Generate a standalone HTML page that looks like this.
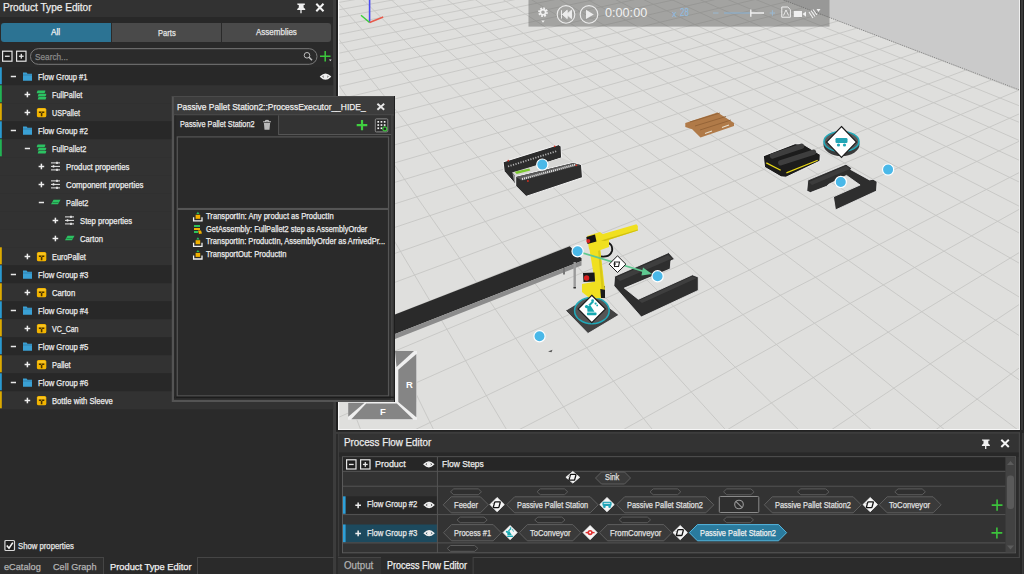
<!DOCTYPE html>
<html><head><meta charset="utf-8"><style>
html,body{margin:0;padding:0;width:1024px;height:574px;overflow:hidden;background:#2b2b2b;}
.t{position:absolute;font-family:"Liberation Sans",sans-serif;line-height:1;white-space:nowrap;transform-origin:0 0;-webkit-text-stroke:0.25px currentColor;}
.r{position:absolute;}
svg.r{overflow:visible;}
</style></head><body>
<div class="r" style="left:0px;top:0px;width:334px;height:574px;background:#2a2a2a;"></div>
<div class="r" style="left:0px;top:0px;width:334px;height:16.6px;background:#323232;"></div>
<div class="r" style="left:0px;top:16.6px;width:334px;height:6.4px;background:#282828;"></div>
<div class="t" style="left:3.40px;top:1.61px;font-size:10.5px;color:#ececec;transform:scaleX(0.9629);">Product Type Editor</div>
<svg class="r" style="left:295px;top:2px;" width="14" height="12" viewBox="0 0 14 12"><path d="M2.2,1.5 h7.6 v1.4 h-1.2 v2.6 l1.6,1.6 v1 h-8 v-1 l1.6,-1.6 v-2.6 h-1.2 z" fill="#f0f0f0"/><path d="M6,8 v3.2" stroke="#f0f0f0" stroke-width="1.3"/></svg>
<svg class="r" style="left:314px;top:2px;" width="12" height="12" viewBox="0 0 12 12"><path d="M2.3,1.8 L9.5,9.3 M9.5,1.8 L2.3,9.3" stroke="#f4f4f4" stroke-width="2" fill="none"/></svg>
<div class="r" style="left:333.3px;top:0px;width:2.6px;height:574px;background:#3c3c3c;"></div>
<div class="r" style="left:335.9px;top:0px;width:2.1px;height:574px;background:#1f1f1f;"></div>
<div class="r" style="left:1px;top:23px;width:110px;height:19px;background:#2c7393;border-radius:3px 0 0 3px"></div>
<div class="r" style="left:112px;top:23px;width:108.5px;height:19px;background:#4a4a4a;"></div>
<div class="r" style="left:222px;top:23px;width:109px;height:19px;background:#4a4a4a;border-radius:0 3px 3px 0"></div>
<div class="t" style="left:51.20px;top:28.42px;font-size:8.6px;color:#f4f4f4;transform:scaleX(0.9625);">All</div>
<div class="t" style="left:157.50px;top:28.52px;font-size:8.6px;color:#e6e6e6;transform:scaleX(0.8818);">Parts</div>
<div class="t" style="left:256.10px;top:28.42px;font-size:8.6px;color:#e6e6e6;transform:scaleX(0.9302);">Assemblies</div>
<svg class="r" style="left:0px;top:48px;" width="334" height="18" viewBox="0 0 334 18"><rect x="2.6" y="3.2" width="9.4" height="10" fill="#1e1e1e" stroke="#e6e6e6" stroke-width="1.2"/><rect x="4.9" y="7.6" width="4.8" height="1.3" fill="#e6e6e6"/><rect x="16.6" y="3.2" width="9.4" height="10" fill="#1e1e1e" stroke="#e6e6e6" stroke-width="1.2"/><rect x="18.9" y="7.6" width="4.8" height="1.3" fill="#e6e6e6"/><rect x="20.65" y="5.85" width="1.3" height="4.8" fill="#e6e6e6"/><rect x="30.5" y="0.7" width="286.5" height="15.6" rx="7.8" fill="#2b2b2b" stroke="#7a7a7a" stroke-width="1"/><circle cx="307" cy="7.3" r="2.8" fill="none" stroke="#bdbdbd" stroke-width="1"/><path d="M309,9.3 L312,12.3" stroke="#bdbdbd" stroke-width="1.6"/><path d="M320,8.2 h10.5 M325.2,3 v10.5" stroke="#3cc83c" stroke-width="1.5"/><path d="M329,11.5 h2.6 l-1.3,1.8 z" fill="#ddd"/></svg>
<div class="t" style="left:35.40px;top:52.53px;font-size:9.3px;color:#8a8a8a;transform:scaleX(0.8867);">Search...</div>
<svg class="r" style="left:0px;top:0px;" width="334" height="574" viewBox="0 0 334 574"><rect x="0" y="67.3" width="333.3" height="18" fill="#282828"/><rect x="0" y="67.3" width="1.8" height="17" fill="#2a9ad0"/><rect x="10.8" y="75.75" width="5.2" height="1.5" fill="#e8e8e8"/><g transform="translate(23,72.1)"><path d="M0,0.5 h3.5 l1,1.2 h4.5 v7 h-9 z" fill="#3aa0d4"/><rect x="0" y="2.6" width="9" height="0.6" fill="#2b6f94"/></g><rect x="0" y="85.3" width="333.3" height="18" fill="#323232"/><rect x="0" y="85.3" width="1.8" height="17" fill="#22b455"/><rect x="24.599999999999998" y="93.75" width="5.6" height="1.5" fill="#f0f0f0"/><rect x="26.65" y="91.7" width="1.5" height="5.6" fill="#f0f0f0"/><g transform="translate(36.7,90.2)" fill="#2cc262"><path d="M1.3,0.2 h7 q0.6,0 0.4,0.6 l-0.6,1.8 q-0.2,0.4 -0.7,0.4 h-7 q-0.5,0 -0.3,-0.5 l0.6,-1.9 q0.2,-0.4 0.6,-0.4 z"/><path d="M2.3,3.6 h7 q0.5,0 0.3,0.5 l-0.6,1.8 q-0.2,0.4 -0.6,0.4 h-7 q-0.5,0 -0.3,-0.5 l0.6,-1.8 q0.2,-0.4 0.6,-0.4 z"/><path d="M2.3,6.7 h7 q0.5,0 0.3,0.5 l-0.6,1.8 q-0.2,0.4 -0.6,0.4 h-7 q-0.5,0 -0.3,-0.5 l0.6,-1.8 q0.2,-0.4 0.6,-0.4 z"/></g><rect x="0" y="103.3" width="333.3" height="18" fill="#323232"/><rect x="0" y="103.3" width="1.8" height="17" fill="#dcaa00"/><rect x="24.599999999999998" y="111.75" width="5.6" height="1.5" fill="#f0f0f0"/><rect x="26.65" y="109.7" width="1.5" height="5.6" fill="#f0f0f0"/><g transform="translate(36.7,107.8)"><rect x="0.2" y="0.2" width="9.4" height="9.3" rx="1.6" fill="#f2b400"/><path d="M1,2.2 h7.8" stroke="#ffd84a" stroke-width="0.9"/><path d="M2.2,3.6 h5.4 v1.6 h-1.9 v3.2 h-1.6 v-3.2 h-1.9 z" fill="#4a3400"/><path d="M4.9,3.6 v1.6" stroke="#f2b400" stroke-width="0.6"/></g><rect x="0" y="121.3" width="333.3" height="18" fill="#282828"/><rect x="0" y="121.3" width="1.8" height="17" fill="#2a9ad0"/><rect x="10.8" y="129.75" width="5.2" height="1.5" fill="#e8e8e8"/><g transform="translate(23,126.1)"><path d="M0,0.5 h3.5 l1,1.2 h4.5 v7 h-9 z" fill="#3aa0d4"/><rect x="0" y="2.6" width="9" height="0.6" fill="#2b6f94"/></g><rect x="0" y="139.3" width="333.3" height="18" fill="#323232"/><rect x="0" y="139.3" width="1.8" height="17" fill="#22b455"/><rect x="24.799999999999997" y="147.75" width="5.2" height="1.5" fill="#e8e8e8"/><g transform="translate(36.7,144.20000000000002)" fill="#2cc262"><path d="M1.3,0.2 h7 q0.6,0 0.4,0.6 l-0.6,1.8 q-0.2,0.4 -0.7,0.4 h-7 q-0.5,0 -0.3,-0.5 l0.6,-1.9 q0.2,-0.4 0.6,-0.4 z"/><path d="M2.3,3.6 h7 q0.5,0 0.3,0.5 l-0.6,1.8 q-0.2,0.4 -0.6,0.4 h-7 q-0.5,0 -0.3,-0.5 l0.6,-1.8 q0.2,-0.4 0.6,-0.4 z"/><path d="M2.3,6.7 h7 q0.5,0 0.3,0.5 l-0.6,1.8 q-0.2,0.4 -0.6,0.4 h-7 q-0.5,0 -0.3,-0.5 l0.6,-1.8 q0.2,-0.4 0.6,-0.4 z"/></g><rect x="0" y="157.3" width="333.3" height="18" fill="#323232"/><rect x="38.6" y="165.75" width="5.6" height="1.5" fill="#f0f0f0"/><rect x="40.65" y="163.7" width="1.5" height="5.6" fill="#f0f0f0"/><g transform="translate(51,161.9)" stroke="#e8e8e8" stroke-width="1" fill="none"><path d="M0,1 h9 M0,4.5 h9 M0,8 h9"/><path d="M6,-0.2 v2.4 M2.5,3.3 v2.4 M6,6.8 v2.4" stroke-width="1.6"/></g><rect x="0" y="175.3" width="333.3" height="18" fill="#323232"/><rect x="38.6" y="183.75" width="5.6" height="1.5" fill="#f0f0f0"/><rect x="40.65" y="181.7" width="1.5" height="5.6" fill="#f0f0f0"/><g transform="translate(51,179.9)" stroke="#e8e8e8" stroke-width="1" fill="none"><path d="M0,1 h9 M0,4.5 h9 M0,8 h9"/><path d="M6,-0.2 v2.4 M2.5,3.3 v2.4 M6,6.8 v2.4" stroke-width="1.6"/></g><rect x="0" y="193.3" width="333.3" height="18" fill="#323232"/><rect x="38.8" y="201.75" width="5.2" height="1.5" fill="#e8e8e8"/><g transform="translate(51,199.70000000000002)"><path d="M2.5,0 h7 l-2.5,4.6 h-7 z" fill="#2cc262"/><path d="M1.5,2.8 h6" stroke="#1c6b3a" stroke-width="0.6"/></g><rect x="0" y="211.3" width="333.3" height="18" fill="#323232"/><rect x="52.6" y="219.75" width="5.6" height="1.5" fill="#f0f0f0"/><rect x="54.65" y="217.7" width="1.5" height="5.6" fill="#f0f0f0"/><g transform="translate(65,215.9)" stroke="#e8e8e8" stroke-width="1" fill="none"><path d="M0,1 h9 M0,4.5 h9 M0,8 h9"/><path d="M6,-0.2 v2.4 M2.5,3.3 v2.4 M6,6.8 v2.4" stroke-width="1.6"/></g><rect x="0" y="229.3" width="333.3" height="18" fill="#323232"/><rect x="52.6" y="237.75" width="5.6" height="1.5" fill="#f0f0f0"/><rect x="54.65" y="235.7" width="1.5" height="5.6" fill="#f0f0f0"/><g transform="translate(65,235.70000000000002)"><path d="M2.5,0 h7 l-2.5,4.6 h-7 z" fill="#2cc262"/><path d="M1.5,2.8 h6" stroke="#1c6b3a" stroke-width="0.6"/></g><rect x="0" y="247.3" width="333.3" height="18" fill="#323232"/><rect x="0" y="247.3" width="1.8" height="17" fill="#dcaa00"/><rect x="24.599999999999998" y="255.75" width="5.6" height="1.5" fill="#f0f0f0"/><rect x="26.65" y="253.7" width="1.5" height="5.6" fill="#f0f0f0"/><g transform="translate(36.7,251.8)"><rect x="0.2" y="0.2" width="9.4" height="9.3" rx="1.6" fill="#f2b400"/><path d="M1,2.2 h7.8" stroke="#ffd84a" stroke-width="0.9"/><path d="M2.2,3.6 h5.4 v1.6 h-1.9 v3.2 h-1.6 v-3.2 h-1.9 z" fill="#4a3400"/><path d="M4.9,3.6 v1.6" stroke="#f2b400" stroke-width="0.6"/></g><rect x="0" y="265.3" width="333.3" height="18" fill="#282828"/><rect x="0" y="265.3" width="1.8" height="17" fill="#2a9ad0"/><rect x="10.8" y="273.75" width="5.2" height="1.5" fill="#e8e8e8"/><g transform="translate(23,270.1)"><path d="M0,0.5 h3.5 l1,1.2 h4.5 v7 h-9 z" fill="#3aa0d4"/><rect x="0" y="2.6" width="9" height="0.6" fill="#2b6f94"/></g><rect x="0" y="283.3" width="333.3" height="18" fill="#323232"/><rect x="0" y="283.3" width="1.8" height="17" fill="#dcaa00"/><rect x="24.599999999999998" y="291.75" width="5.6" height="1.5" fill="#f0f0f0"/><rect x="26.65" y="289.7" width="1.5" height="5.6" fill="#f0f0f0"/><g transform="translate(36.7,287.8)"><rect x="0.2" y="0.2" width="9.4" height="9.3" rx="1.6" fill="#f2b400"/><path d="M1,2.2 h7.8" stroke="#ffd84a" stroke-width="0.9"/><path d="M2.2,3.6 h5.4 v1.6 h-1.9 v3.2 h-1.6 v-3.2 h-1.9 z" fill="#4a3400"/><path d="M4.9,3.6 v1.6" stroke="#f2b400" stroke-width="0.6"/></g><rect x="0" y="301.3" width="333.3" height="18" fill="#282828"/><rect x="0" y="301.3" width="1.8" height="17" fill="#2a9ad0"/><rect x="10.8" y="309.75" width="5.2" height="1.5" fill="#e8e8e8"/><g transform="translate(23,306.1)"><path d="M0,0.5 h3.5 l1,1.2 h4.5 v7 h-9 z" fill="#3aa0d4"/><rect x="0" y="2.6" width="9" height="0.6" fill="#2b6f94"/></g><rect x="0" y="319.3" width="333.3" height="18" fill="#323232"/><rect x="0" y="319.3" width="1.8" height="17" fill="#dcaa00"/><rect x="24.599999999999998" y="327.75" width="5.6" height="1.5" fill="#f0f0f0"/><rect x="26.65" y="325.7" width="1.5" height="5.6" fill="#f0f0f0"/><g transform="translate(36.7,323.8)"><rect x="0.2" y="0.2" width="9.4" height="9.3" rx="1.6" fill="#f2b400"/><path d="M1,2.2 h7.8" stroke="#ffd84a" stroke-width="0.9"/><path d="M2.2,3.6 h5.4 v1.6 h-1.9 v3.2 h-1.6 v-3.2 h-1.9 z" fill="#4a3400"/><path d="M4.9,3.6 v1.6" stroke="#f2b400" stroke-width="0.6"/></g><rect x="0" y="337.3" width="333.3" height="18" fill="#282828"/><rect x="0" y="337.3" width="1.8" height="17" fill="#2a9ad0"/><rect x="10.8" y="345.75" width="5.2" height="1.5" fill="#e8e8e8"/><g transform="translate(23,342.1)"><path d="M0,0.5 h3.5 l1,1.2 h4.5 v7 h-9 z" fill="#3aa0d4"/><rect x="0" y="2.6" width="9" height="0.6" fill="#2b6f94"/></g><rect x="0" y="355.3" width="333.3" height="18" fill="#323232"/><rect x="0" y="355.3" width="1.8" height="17" fill="#dcaa00"/><rect x="24.599999999999998" y="363.75" width="5.6" height="1.5" fill="#f0f0f0"/><rect x="26.65" y="361.7" width="1.5" height="5.6" fill="#f0f0f0"/><g transform="translate(36.7,359.8)"><rect x="0.2" y="0.2" width="9.4" height="9.3" rx="1.6" fill="#f2b400"/><path d="M1,2.2 h7.8" stroke="#ffd84a" stroke-width="0.9"/><path d="M2.2,3.6 h5.4 v1.6 h-1.9 v3.2 h-1.6 v-3.2 h-1.9 z" fill="#4a3400"/><path d="M4.9,3.6 v1.6" stroke="#f2b400" stroke-width="0.6"/></g><rect x="0" y="373.3" width="333.3" height="18" fill="#282828"/><rect x="0" y="373.3" width="1.8" height="17" fill="#2a9ad0"/><rect x="10.8" y="381.75" width="5.2" height="1.5" fill="#e8e8e8"/><g transform="translate(23,378.1)"><path d="M0,0.5 h3.5 l1,1.2 h4.5 v7 h-9 z" fill="#3aa0d4"/><rect x="0" y="2.6" width="9" height="0.6" fill="#2b6f94"/></g><rect x="0" y="391.3" width="333.3" height="18" fill="#323232"/><rect x="0" y="391.3" width="1.8" height="17" fill="#dcaa00"/><rect x="24.599999999999998" y="399.75" width="5.6" height="1.5" fill="#f0f0f0"/><rect x="26.65" y="397.7" width="1.5" height="5.6" fill="#f0f0f0"/><g transform="translate(36.7,395.8)"><rect x="0.2" y="0.2" width="9.4" height="9.3" rx="1.6" fill="#f2b400"/><path d="M1,2.2 h7.8" stroke="#ffd84a" stroke-width="0.9"/><path d="M2.2,3.6 h5.4 v1.6 h-1.9 v3.2 h-1.6 v-3.2 h-1.9 z" fill="#4a3400"/><path d="M4.9,3.6 v1.6" stroke="#f2b400" stroke-width="0.6"/></g><g transform="translate(325.5,76.6) scale(1.0)"><path d="M-4.6,0 Q0,-4.6 4.6,0 Q0,4.6 -4.6,0 Z" fill="none" stroke="#f0f0f0" stroke-width="1.6"/><circle cx="0" cy="0" r="2.1" fill="#f0f0f0"/></g></svg>
<div class="t" style="left:38.00px;top:73.22px;font-size:8.6px;color:#ececec;transform:scaleX(0.8777);">Flow Group #1</div>
<div class="t" style="left:51.90px;top:91.22px;font-size:8.6px;color:#ececec;transform:scaleX(0.8567);">FullPallet</div>
<div class="t" style="left:51.90px;top:109.22px;font-size:8.6px;color:#ececec;transform:scaleX(0.8338);">USPallet</div>
<div class="t" style="left:38.00px;top:127.22px;font-size:8.6px;color:#ececec;transform:scaleX(0.8865);">Flow Group #2</div>
<div class="t" style="left:51.90px;top:145.22px;font-size:8.6px;color:#ececec;transform:scaleX(0.8543);">FullPallet2</div>
<div class="t" style="left:65.90px;top:163.22px;font-size:8.6px;color:#ececec;transform:scaleX(0.9023);">Product properties</div>
<div class="t" style="left:65.90px;top:181.22px;font-size:8.6px;color:#ececec;transform:scaleX(0.9108);">Component properties</div>
<div class="t" style="left:65.90px;top:199.22px;font-size:8.6px;color:#ececec;transform:scaleX(0.8519);">Pallet2</div>
<div class="t" style="left:79.90px;top:217.22px;font-size:8.6px;color:#ececec;transform:scaleX(0.8951);">Step properties</div>
<div class="t" style="left:79.90px;top:235.22px;font-size:8.6px;color:#ececec;transform:scaleX(0.8872);">Carton</div>
<div class="t" style="left:51.90px;top:253.22px;font-size:8.6px;color:#ececec;transform:scaleX(0.8544);">EuroPallet</div>
<div class="t" style="left:38.00px;top:271.22px;font-size:8.6px;color:#ececec;transform:scaleX(0.8936);">Flow Group #3</div>
<div class="t" style="left:51.90px;top:289.22px;font-size:8.6px;color:#ececec;transform:scaleX(0.8989);">Carton</div>
<div class="t" style="left:38.00px;top:307.22px;font-size:8.6px;color:#ececec;transform:scaleX(0.8936);">Flow Group #4</div>
<div class="t" style="left:51.90px;top:325.22px;font-size:8.6px;color:#ececec;transform:scaleX(0.8153);">VC_Can</div>
<div class="t" style="left:38.00px;top:343.22px;font-size:8.6px;color:#ececec;transform:scaleX(0.8936);">Flow Group #5</div>
<div class="t" style="left:51.90px;top:361.22px;font-size:8.6px;color:#ececec;transform:scaleX(0.8693);">Pallet</div>
<div class="t" style="left:38.00px;top:379.22px;font-size:8.6px;color:#ececec;transform:scaleX(0.8936);">Flow Group #6</div>
<div class="t" style="left:51.90px;top:397.22px;font-size:8.6px;color:#ececec;transform:scaleX(0.8895);">Bottle with Sleeve</div>
<svg class="r" style="left:0px;top:538px;" width="80" height="16" viewBox="0 0 80 16"><rect x="4.9" y="2.5" width="9.6" height="10" rx="1" fill="#1e1e1e" stroke="#d8d8d8" stroke-width="1.2"/><path d="M6.8,7.6 L9,10.2 L12.8,4.6" stroke="#f4f4f4" stroke-width="1.6" fill="none"/></svg>
<div class="t" style="left:17.70px;top:541.82px;font-size:8.6px;color:#e6e6e6;transform:scaleX(0.8996);">Show properties</div>
<div class="r" style="left:0px;top:557px;width:104px;height:17px;background:#2e2e2e;"></div>
<div class="r" style="left:0px;top:557px;width:104px;height:1px;background:#454545;"></div>
<div class="r" style="left:103.3px;top:557px;width:1px;height:17px;background:#454545;"></div>
<div class="r" style="left:196.6px;top:557px;width:1px;height:17px;background:#454545;"></div>
<div class="r" style="left:197.6px;top:557px;width:136px;height:1px;background:#454545;"></div>
<div class="t" style="left:3.80px;top:561.57px;font-size:9.6px;color:#b4b4b4;transform:scaleX(0.9577);">eCatalog</div>
<div class="t" style="left:53.20px;top:561.57px;font-size:9.6px;color:#b4b4b4;transform:scaleX(0.9481);">Cell Graph</div>
<div class="t" style="left:109.70px;top:561.57px;font-size:9.6px;color:#f0f0f0;transform:scaleX(0.9711);">Product Type Editor</div>
<svg class="r" style="left:338px;top:0px;overflow:hidden" width="682.2" height="430" viewBox="0 0 682.2 430"><rect x="0" y="0" width="682.2" height="430" fill="#dfdfdd"/><path d="M-17.9,-26.2L6.5,-30.0M-17.7,-20.4L41.9,-30.0M-17.9,-14.3L77.4,-30.0M-17.7,-8.0L112.9,-29.9M-17.9,-1.3L148.4,-29.9M-17.7,5.7L184.3,-30.0M-17.9,13.2L219.8,-30.0M-17.7,20.9L255.4,-30.0M-17.9,29.3L290.9,-30.0M-17.6,38.0L326.4,-29.9M-17.9,47.3L362.0,-29.9M-17.6,57.1L397.9,-30.0M-17.9,67.7L433.4,-30.0M-17.6,78.8L469.0,-30.0M-17.9,90.9L504.6,-30.0M-17.6,103.6L540.2,-30.0M-17.9,117.5L575.7,-29.9M-17.6,132.2L611.6,-30.0M-18.0,148.4L647.2,-30.0M-17.6,165.6L682.8,-30.0M-18.0,184.6L701.8,-25.1M-17.5,205.0L701.9,-14.1M-18.0,227.7L701.9,-1.9M-17.5,252.3L701.8,11.4M-18.0,279.8L702.0,26.1M-17.5,310.0L701.9,42.5M-16.9,343.7L701.8,60.9M-17.4,382.1L701.7,81.5M-16.8,425.1L701.9,104.7M34.9,449.8L701.8,131.4M141.6,450.0L701.6,162.1M249.5,449.6L701.9,197.8M356.3,449.8L701.8,240.1M464.0,449.4L701.6,290.9M570.9,449.7L701.4,353.0M677.8,449.9L701.8,429.9M-17.9,324.6L30.5,449.9M-17.9,198.3L105.5,449.8M-18.0,116.1L180.6,449.8M-17.9,58.6L255.6,449.8M-17.9,16.1L330.7,449.8M-18.0,-16.8L405.7,449.7M-5.0,-30.0L480.8,449.7M20.0,-30.0L555.9,449.7M44.9,-30.0L630.9,449.6M69.9,-30.0L701.5,446.2M95.0,-29.9L701.5,394.0M119.9,-29.9L701.5,348.8M144.9,-29.9L701.5,309.4M169.9,-30.0L701.5,274.8M194.9,-30.0L701.5,244.0M219.8,-30.0L701.5,216.6M244.8,-30.0L701.5,191.9M270.0,-29.9L701.5,169.6M295.0,-29.9L701.5,149.4M320.0,-29.9L701.5,130.9M344.9,-29.9L701.6,114.0M369.9,-30.0L701.6,98.5M394.9,-30.0L701.6,84.2M419.9,-30.0L701.6,70.9M444.9,-30.0L701.6,58.6M470.2,-29.9L701.6,47.2M495.2,-29.9L701.6,36.5M520.2,-29.9L701.6,26.6M545.2,-30.0L701.6,17.2M570.1,-30.0L701.6,8.5M595.1,-30.0L701.6,0.2M620.1,-30.0L702.0,-7.4M645.5,-29.9L702.0,-14.8M670.5,-29.9L702.0,-21.7M695.5,-29.9L702.0,-28.3" stroke="#c6c6c4" stroke-width="0.9" fill="none"/><path d="M445.5,0 L682.2,0 L682.2,90.2 Z" fill="#cacaca"/><path d="M445.5,0 L682.2,90.2" stroke="#7a7a7a" stroke-width="0.8" stroke-dasharray="1.3,1"/><rect x="0" y="0" width="1.2" height="430" fill="#f6f6f6"/><rect x="0" y="429" width="682.2" height="1.1" fill="#f6f6f6"/><rect x="681.0" y="0" width="1.2" height="430" fill="#f0f0f0"/><g transform="translate(-338,0)"><path d="M369.6,0 V22.5" stroke="#4a4af0" stroke-width="1.6"/><path d="M369.6,22.5 L361,15.2" stroke="#3ad03a" stroke-width="1.4"/><path d="M369.6,22.5 L383.2,17" stroke="#e85a4a" stroke-width="1.4"/><path d="M503.1,161.9 L558.5,144.7 L561.1,146.3 L561.6,157.8 L515.0,173.0 L515.7,186.0 L526.1,196.4 L504.2,171.3 Z" fill="#2c2c2c" stroke="#f4f4f4" stroke-width="1"/><path d="M512.0,172.5 L561.6,157.8 L573.1,162.5 L517.0,177.5 Z" fill="#d6d6d4" /><path d="M514.6,171.8 L529.3,168.4 L530.3,170.5 L516.7,174.0 Z" fill="#7cc830" /><path d="M512.5,173.0 L515.5,177.0 L519.0,188.0 L514.0,181.0 Z" fill="#9a9a9a" /><path d="M515.7,176.5 L573.1,162.5 L581.5,164.6 L582.5,177.6 L526.1,196.4 L515.7,186.0 Z" fill="#2e2e2e" stroke="#f4f4f4" stroke-width="1"/><path d="M516.0,177.0 L573.1,163.0 L580.0,165.0 L522.0,180.5 Z" fill="#5a5a5a" /><path d="M522,179 L576,164.5" stroke="#e4e4e4" stroke-width="2" stroke-dasharray="1.1,0.9"/><path d="M508,166.5 L557,151" stroke="#b0b0b0" stroke-width="1.8" stroke-dasharray="1.2,1.4"/><circle cx="508.3" cy="160.7" r="0.9" fill="#d83020"/><circle cx="554.7" cy="146.3" r="0.9" fill="#d83020"/><circle cx="576.3" cy="165.3" r="0.9" fill="#d83020"/><circle cx="527.9" cy="181" r="0.9" fill="#d83020"/><path d="M685.3,123.1 L717.5,112.6 L734.0,123.1 L734.0,126.1 L700.5,137.5 L692.2,129.2 L685.3,127.0 Z" fill="#b07a48" /><path d="M690,122 L720,113 M695,126 L726,116.5 M700,130 L731,120" stroke="#8e5e34" stroke-width="0.8"/><path d="M705,133.5 L712,131 M722,127.5 L729,125" stroke="#e8e0d0" stroke-width="1.2"/><path d="M763.3,155.9 L795.1,143.7 L803.8,144.6 L820.3,154.6 L819.9,161.1 L785.9,177.2 L781.1,176.8 L764.6,167.2 Z" fill="#1c1c1c" stroke="#f4f4f4" stroke-width="0.9"/><path d="M772.5,156 L801.5,146.2" stroke="#3e3e3e" stroke-width="5.4" stroke-linecap="round"/><path d="M780.8,162.8 L813.5,152.2" stroke="#3e3e3e" stroke-width="5.4" stroke-linecap="round"/><path d="M766.3,162.9 L780.7,170.3 M786.4,172.9 L817.7,160.3" stroke="#e8d818" stroke-width="1.2" fill="none"/><ellipse cx="841.5" cy="144.5" rx="18" ry="11.5" fill="#3a3a3a"/><ellipse cx="841.5" cy="141.5" rx="17.5" ry="10" fill="#5a5a5a" stroke="#22a8b8" stroke-width="1.6"/><path d="M841.5,126.5 L856.5,142.0 L841.5,157.5 L826.5,142.0 Z" fill="#ffffff" stroke="#1a1a1a" stroke-width="1.1"/><rect x="835.5" y="138" width="12" height="5" rx="1.2" fill="#22a5b5"/><circle cx="838.5" cy="145" r="1.6" fill="#22a5b5"/><circle cx="844.5" cy="145" r="1.6" fill="#22a5b5"/><path d="M807.8,180.1 L846.0,164.2 L851.7,168.1 L850.7,169.6 L869.5,179.9 L873.1,179.2 L877.1,181.6 L876.5,191.0 L835.5,209.9 L833.4,196.8 L860.1,185.0 L846.5,175.4 L828.7,184.3 L826.6,186.3 L810.4,192.6 L806.8,191.1 Z" fill="#2e2e2e" stroke="#f0f0f0" stroke-width="0.8"/><path d="M809.0,182.0 L846.0,166.0 L850.0,169.0 L812.0,185.0 Z" fill="#3c3c3c" /><path d="M395.0,314.6 L569.8,246.3 L581.5,258.5 L581.5,261.0 L395.0,333.9 Z" fill="#2a2a2a" /><path d="M395.0,333.9 L581.5,261.0 L581.5,265.5 L395.0,339.1 Z" fill="#8c8c8c" /><path d="M574.7,262 V288" stroke="#9a9a9a" stroke-width="2.4"/><path d="M574.7,287 V288.5" stroke="#333" stroke-width="2.4"/><path d="M564,268 V274.5" stroke="#777" stroke-width="2"/><path d="M565.5,310.5 L592.0,294.5 L619.0,315.0 L588.0,333.5 Z" fill="#424242" stroke="#f0f0f0" stroke-width="0.8" stroke-linejoin="round"/><ellipse cx="591.9" cy="310.7" rx="17.3" ry="13.1" fill="#555" stroke="#20a8b8" stroke-width="1.5"/><path d="M582.0,284.0 L596.0,281.4 L605.0,287.0 L605.0,298.1 L590.0,298.5 L582.0,292.0 Z" fill="#f0e020" /><path d="M600.0,285.6 L605.0,286.0 L605.0,298.0 L601.0,298.0 Z" fill="#1a1a1a" /><path d="M589.0,246.5 L600.1,247.9 L605.0,289.7 L595.9,288.3 Z" fill="#f0e020" /><path d="M598.0,250.0 L600.1,250.0 L604.0,289.0 L601.5,289.0 Z" fill="#d8c818" /><path d="M583.0,273.0 L594.5,272.5 L595.0,281.4 L583.5,282.0 Z" fill="#1a1a1a" /><circle cx="586.6" cy="278" r="2.7" fill="#d82020"/><path d="M604.5,242 Q613.5,243 612,251 Q610,257.5 601,256.5" stroke="#151515" stroke-width="1.9" fill="none"/><path d="M587.0,236.0 L600.0,232.0 L609.0,239.0 L609.0,247.0 L595.0,252.0 L589.0,249.0 Z" fill="#f0e020" /><path d="M598.7,235.3 L636.4,224.2 L637.8,226.0 L637.8,230.5 L605.0,240.9 L600.0,242.0 Z" fill="#f0e020" /><path d="M601.0,240.5 L637.8,229.5 L637.8,230.5 L605.0,240.9 Z" fill="#d0c010" /><path d="M586.3,237.0 L595.0,234.5 L596.5,241.5 L587.5,244.0 Z" fill="#151515" /><circle cx="588.3" cy="241" r="2" fill="#d82020"/><path d="M591.8,295.3 L605.5,309.0 L591.8,322.7 L578.1,309.0 Z" fill="#ffffff" stroke="#1a1a1a" stroke-width="1.2"/><g fill="#17a8b0"><rect x="587" y="312.6" width="9.5" height="2.6" rx="0.8"/><path d="M587.5,311.8 L594.5,311.8 L590.5,305.5 L587,306.5 Z"/><circle cx="586.6" cy="306.6" r="1.7"/><path d="M588.2,305 L592.5,300.5 L594,302 L590,306 Z"/><circle cx="592.6" cy="300.6" r="1.3"/><circle cx="595.6" cy="303.6" r="1.1"/><circle cx="597.2" cy="305.4" r="0.9"/></g><path d="M614.6,276.3 L668.7,252.6 L674.6,259.3 L670.9,260.7 L670.2,268.9 L624.3,288.1 L638.3,299.3 L692.4,274.8 L698.3,277.0 L698.3,290.4 L641.3,317.0 L613.9,285.9 Z" fill="#2e2e2e" stroke="#f0f0f0" stroke-width="0.8"/><path d="M616.0,277.5 L668.0,255.0 L672.0,258.5 L620.0,281.0 Z" fill="#3e3e3e" /><path d="M639.0,300.5 L692.0,276.5 L697.0,278.0 L642.0,303.0 Z" fill="#3e3e3e" /><path d="M578,251.5 L649,273" stroke="#5ec890" stroke-width="1.8"/><path d="M652.0,274.0 L643.0,267.5 L641.5,275.5 Z" fill="#5ec890" /><path d="M617.5,255.8 L625.9,264.2 L617.5,272.5 L609.2,264.2 Z" fill="#ffffff" stroke="#1a1a1a" stroke-width="1"/><path d="M614.5,262 h5 l-1,4.5 h-4 z M613.5,264 h2.5" stroke="#222" stroke-width="1.1" fill="none"/><circle cx="542.3" cy="164.6" r="5.6" fill="#4ab8e8" stroke="#ffffff" stroke-width="1.2"/><circle cx="577.6" cy="251.3" r="5.6" fill="#4ab8e8" stroke="#ffffff" stroke-width="1.2"/><circle cx="539.5" cy="336.3" r="5.6" fill="#4ab8e8" stroke="#ffffff" stroke-width="1.2"/><circle cx="657.6" cy="276.3" r="5.6" fill="#4ab8e8" stroke="#ffffff" stroke-width="1.2"/><circle cx="840.8" cy="182" r="5.6" fill="#4ab8e8" stroke="#ffffff" stroke-width="1.2"/><circle cx="888.1" cy="169.6" r="5.6" fill="#4ab8e8" stroke="#ffffff" stroke-width="1.2"/><path d="M548.0,351.5 L552.5,349.8 L551.5,352.2 Z" fill="#555" /><path d="M348.0,351.0 L417.0,351.0 L417.0,419.8 L348.0,419.8 Z" fill="#efefef" /><path d="M395.0,351.0 L414.0,351.0 L396.5,367.0 Z" fill="#858585" /><path d="M398.3,369.8 L416.4,354.1 L416.4,417.2 L398.3,401.9 Z" fill="#858585" /><path d="M351.3,419.2 L366.2,403.5 L396.8,403.5 L413.2,419.2 Z" fill="#858585" /><path d="M348.2,402.7 L364.6,402.7 L348.2,416.8 Z" fill="#858585" /><text x="406" y="387.8" font-family="Liberation Sans" font-weight="bold" font-size="9.5" fill="#ffffff">R</text><text x="380" y="414.8" font-family="Liberation Sans" font-weight="bold" font-size="9.5" fill="#ffffff">F</text><rect x="528.5" y="0" width="301" height="26.6" fill="#5a5a58" fill-opacity="0.45"/><circle cx="543" cy="12.2" r="3.6" fill="none" stroke="#f0f0f0" stroke-width="2.6" stroke-dasharray="1.6,1.2"/><circle cx="543" cy="12.2" r="2.6" fill="none" stroke="#f0f0f0" stroke-width="1.6"/><path d="M541.3,20.5 h3.4 l-1.7,2.2 z" fill="#f0f0f0"/><circle cx="566" cy="14.4" r="8.8" fill="none" stroke="#ececec" stroke-width="1.1"/><path d="M561.5,10.2 v8.4 M567.2,10.2 l-4.8,4.2 l4.8,4.2 z M571.5,10.2 l-4.8,4.2 l4.8,4.2 z" fill="#ececec" stroke="#ececec" stroke-width="1"/><circle cx="589" cy="14.4" r="8.8" fill="none" stroke="#ececec" stroke-width="1.1"/><path d="M586,9.8 L593.8,14.4 L586,19 z" fill="#ececec"/><path d="M713,13 h5.5" stroke="#9ab8d0" stroke-width="1"/><path d="M724,13 H750" stroke="#8ab0d0" stroke-width="1.1"/><path d="M750.8,9.6 V16.8 M750.8,13 H764" stroke="#f0f0f0" stroke-width="1.4"/><path d="M769.7,13 h5.4 M772.4,10.3 v5.4" stroke="#9ab8d0" stroke-width="1"/><path d="M781.8,7 h6 l2.6,2.6 v7.6 h-8.6 z" fill="none" stroke="#f0f0f0" stroke-width="1"/><path d="M783.5,15.5 L786,10 L788.6,15.5" stroke="#f0f0f0" stroke-width="0.9" fill="none"/><rect x="793.8" y="11" width="8.2" height="6" fill="#f0f0f0"/><path d="M802.5,14 l3.5,-2.6 v5.4 z" fill="#f0f0f0"/><path d="M809,12 L813,18 M811,10.5 L815,16.5 M813,9.5 L817,15" stroke="#f0f0f0" stroke-width="1.1"/><path d="M816.5,9 h4 l-2,3 z" fill="#f0f0f0"/></g></svg>
<div class="t" style="left:604.70px;top:6.40px;font-size:13px;color:#f2f2f2;transform:scaleX(0.9730);-webkit-text-stroke:0;">0:00:00</div>
<div class="t" style="left:671.60px;top:9.60px;font-size:8.5px;color:#8cbce4;transform:scaleX(1.0588);-webkit-text-stroke:0;">x</div>
<div class="t" style="left:680.20px;top:8.34px;font-size:10px;color:#8cbce4;transform:scaleX(0.7912);-webkit-text-stroke:0;">28</div>
<div class="r" style="left:1020.2px;top:0px;width:3.8px;height:433px;background:#1f1f1f;"></div>
<div class="r" style="left:1021.3px;top:0px;width:1.5px;height:433px;background:#3a3a3a;"></div>
<div class="r" style="left:336px;top:430px;width:688px;height:3px;background:#262626;"></div>
<div class="r" style="left:336px;top:430px;width:688px;height:144px;background:#2b2b2b;"></div>
<svg class="r" style="left:0px;top:0px;" width="1024" height="574" viewBox="0 0 1024 574"><rect x="336" y="430" width="688" height="1.8" fill="#222222"/><rect x="336" y="431.8" width="688" height="2.1" fill="#3d3d3d"/><rect x="338" y="433.9" width="681" height="18.7" fill="#333333"/><rect x="338" y="432.5" width="1.2" height="124" fill="#3c3c3c"/><rect x="1018.8" y="432.5" width="1.2" height="125" fill="#454545"/><rect x="1020" y="430" width="4" height="144" fill="#262626"/><rect x="1022.3" y="433" width="1.1" height="141" fill="#444"/><rect x="339.2" y="452.6" width="679.4" height="4.2" fill="#282828"/><path d="M981.9,439.4 h7.6 v1.4 h-1.2 v2.6 l1.6,1.6 v1 h-8 v-1 l1.6,-1.6 v-2.6 h-1.2 z" fill="#f0f0f0"/><path d="M985.7,445.9 v3" stroke="#f0f0f0" stroke-width="1.3"/><path d="M1001.3,439.8 L1008.8,447 M1008.8,439.8 L1001.3,447" stroke="#f4f4f4" stroke-width="2" fill="none"/><rect x="342.5" y="456.8" width="673" height="96" fill="#333333" stroke="#5a5a5a" stroke-width="1"/><rect x="343" y="457.3" width="662.5" height="13.6" fill="#262626"/><rect x="437.5" y="471.8" width="568" height="14.4" fill="#303030"/><rect x="343" y="496.3" width="94" height="17.5" fill="#272727"/><rect x="343" y="496.3" width="2.6" height="17.5" fill="#2ea0d8"/><rect x="343" y="524.5" width="94" height="17.8" fill="#1d4a5e"/><rect x="343" y="524.5" width="2.6" height="17.8" fill="#2ea0d8"/><rect x="343" y="470.8" width="662.5" height="1" fill="#555"/><rect x="343" y="485.7" width="662.5" height="1" fill="#555"/><rect x="343" y="514.1" width="662.5" height="1" fill="#555"/><rect x="343" y="542.4" width="662.5" height="1" fill="#555"/><rect x="436.9" y="457" width="1" height="96" fill="#555"/><rect x="1005.5" y="457.3" width="10" height="95" fill="#424242"/><path d="M1010.5,461 l3.5,4 h-7 z" fill="#5c5c5c"/><path d="M1010.5,549.5 l3.5,-4 h-7 z" fill="#5c5c5c"/><rect x="1007" y="475.4" width="7" height="33.6" rx="3" fill="#5a5a5a"/><rect x="346.6" y="459.8" width="9.4" height="9.2" fill="#1e1e1e" stroke="#e6e6e6" stroke-width="1.2"/><rect x="348.9" y="463.8" width="4.8" height="1.3" fill="#e6e6e6"/><rect x="360.6" y="459.8" width="9.4" height="9.2" fill="#1e1e1e" stroke="#e6e6e6" stroke-width="1.2"/><rect x="362.9" y="463.8" width="4.8" height="1.3" fill="#e6e6e6"/><rect x="364.65" y="462.05" width="1.3" height="4.8" fill="#e6e6e6"/><path d="M424.2,464.3 Q428.8,459.7 433.4,464.3 Q428.8,468.9 424.2,464.3 Z" fill="none" stroke="#f0f0f0" stroke-width="1.6"/><circle cx="428.8" cy="464.3" r="2.1" fill="#f0f0f0"/><path d="M355.3,505.3 h5.7 M358.15,502.45 v5.7" stroke="#f0f0f0" stroke-width="1.5"/><path d="M424.5,505.0 Q429.1,500.4 433.7,505.0 Q429.1,509.6 424.5,505.0 Z" fill="none" stroke="#f0f0f0" stroke-width="1.6"/><circle cx="429.1" cy="505.0" r="2.1" fill="#f0f0f0"/><path d="M355.3,533.4 h5.7 M358.15,530.55 v5.7" stroke="#f0f0f0" stroke-width="1.5"/><path d="M424.5,533.2 Q429.1,528.6 433.7,533.2 Q429.1,537.8 424.5,533.2 Z" fill="none" stroke="#f0f0f0" stroke-width="1.6"/><circle cx="429.1" cy="533.2" r="2.1" fill="#f0f0f0"/><path d="M572.8,471.5 L579.7,477.3 L572.8,483.1 L565.9,477.3 Z" fill="#f6f6f6" stroke="#f6f6f6" stroke-width="0.8" stroke-linejoin="round"/><path d="M571.2,474.4 h4.2 q0.7,0 0.5,0.7 l-1.2,4.4 q-0.2,0.7 -0.9,0.7 h-4.2 q-0.7,0 -0.5,-0.7 l1.2,-4.4 q0.2,-0.7 0.9,-0.7 z" stroke="#111" stroke-width="1.3" fill="none"/><path d="M567.8,476.5 l2,-1 v2 z" fill="#888"/><path d="M595.5,478.0 L601.5,472.0 L624.5,472.0 L630.5,478.0 L624.5,484.0 L601.5,484.0 Z" fill="#3a3a3a" stroke="#5e5e5e" stroke-width="1"/><path d="M450.5,491.8 L453.7,488.9 L478.3,488.9 L481.5,491.8 L478.3,494.7 L453.7,494.7 Z" fill="#2f2f2f" stroke="#5c5c5c" stroke-width="1.0"/><path d="M537.1,491.8 L540.3,488.9 L564.5,488.9 L567.7,491.8 L564.5,494.7 L540.3,494.7 Z" fill="#2f2f2f" stroke="#5c5c5c" stroke-width="1.0"/><path d="M650.0,491.8 L653.2,488.9 L677.6,488.9 L680.8,491.8 L677.6,494.7 L653.2,494.7 Z" fill="#2f2f2f" stroke="#5c5c5c" stroke-width="1.0"/><path d="M723.5,491.8 L726.7,488.9 L750.9,488.9 L754.1,491.8 L750.9,494.7 L726.7,494.7 Z" fill="#2f2f2f" stroke="#5c5c5c" stroke-width="1.0"/><path d="M797.5,491.8 L800.7,488.9 L825.8,488.9 L829.0,491.8 L825.8,494.7 L800.7,494.7 Z" fill="#2f2f2f" stroke="#5c5c5c" stroke-width="1.0"/><path d="M894.8,491.8 L898.0,488.9 L922.2,488.9 L925.4,491.8 L922.2,494.7 L898.0,494.7 Z" fill="#2f2f2f" stroke="#5c5c5c" stroke-width="1.0"/><path d="M443.2,504.8 L451.2,496.8 L480.4,496.8 L488.4,504.8 L480.4,512.8 L451.2,512.8 Z" fill="#3a3a3a" stroke="#5e5e5e" stroke-width="1"/><path d="M497.1,497.5 L504.3,504.6 L497.1,511.8 L490.0,504.6 Z" fill="#f6f6f6" stroke="#f6f6f6" stroke-width="0.8" stroke-linejoin="round"/><path d="M495.5,501.8 h4.2 q0.7,0 0.5,0.7 l-1.2,4.4 q-0.2,0.7 -0.9,0.7 h-4.2 q-0.7,0 -0.5,-0.7 l1.2,-4.4 q0.2,-0.7 0.9,-0.7 z" stroke="#111" stroke-width="1.3" fill="none"/><path d="M492.1,503.8 l2,-1 v2 z" fill="#888"/><path d="M506.6,504.8 L514.6,496.8 L590.2,496.8 L598.2,504.8 L590.2,512.8 L514.6,512.8 Z" fill="#3a3a3a" stroke="#5e5e5e" stroke-width="1"/><path d="M607.0,497.5 L614.2,504.6 L607.0,511.8 L599.8,504.6 Z" fill="#f6f6f6" stroke="#f6f6f6" stroke-width="0.8" stroke-linejoin="round"/><rect x="602.4" y="501.8" width="9.2" height="4.2" rx="1.3" fill="#22a5b8"/><path d="M603.8,503.4 h6.4" stroke="#f6f6f6" stroke-width="0.8"/><circle cx="604.4" cy="506.8" r="1.3" fill="#22a5b8"/><circle cx="609.6" cy="506.8" r="1.3" fill="#22a5b8"/><path d="M616.6,504.8 L624.6,496.8 L705.8,496.8 L713.8,504.8 L705.8,512.8 L624.6,512.8 Z" fill="#3a3a3a" stroke="#5e5e5e" stroke-width="1"/><rect x="719.3" y="496.5" width="39.5" height="16" rx="1" fill="#2f2f2f" stroke="#8a8a8a" stroke-width="1"/><circle cx="739" cy="504.5" r="4.3" fill="none" stroke="#9a9a9a" stroke-width="1.1"/><path d="M735.8,501.3 L742.2,507.7" stroke="#9a9a9a" stroke-width="1.1"/><path d="M764.3,504.8 L772.3,496.8 L853.2,496.8 L861.2,504.8 L853.2,512.8 L772.3,512.8 Z" fill="#3a3a3a" stroke="#5e5e5e" stroke-width="1"/><path d="M870.2,497.5 L877.5,504.6 L870.2,511.8 L863.0,504.6 Z" fill="#f6f6f6" stroke="#f6f6f6" stroke-width="0.8" stroke-linejoin="round"/><path d="M868.6,501.8 h4.2 q0.7,0 0.5,0.7 l-1.2,4.4 q-0.2,0.7 -0.9,0.7 h-4.2 q-0.7,0 -0.5,-0.7 l1.2,-4.4 q0.2,-0.7 0.9,-0.7 z" stroke="#111" stroke-width="1.3" fill="none"/><path d="M865.2,503.8 l2,-1 v2 z" fill="#888"/><path d="M879.2,504.8 L887.2,496.8 L933.1,496.8 L941.1,504.8 L933.1,512.8 L887.2,512.8 Z" fill="#3a3a3a" stroke="#5e5e5e" stroke-width="1"/><path d="M991.7,505.1 H1002.5 M997.1,499.6 V510.7" stroke="#3cc43c" stroke-width="1.6"/><path d="M457.0,519.9 L460.2,517.1 L484.0,517.1 L487.2,519.9 L484.0,522.7 L460.2,522.7 Z" fill="#2f2f2f" stroke="#5c5c5c" stroke-width="1.0"/><path d="M534.7,519.9 L537.9,517.1 L561.8,517.1 L565.0,519.9 L561.8,522.7 L537.9,522.7 Z" fill="#2f2f2f" stroke="#5c5c5c" stroke-width="1.0"/><path d="M619.2,519.9 L622.4,517.1 L647.4,517.1 L650.6,519.9 L647.4,522.7 L622.4,522.7 Z" fill="#2f2f2f" stroke="#5c5c5c" stroke-width="1.0"/><path d="M723.5,519.9 L726.7,517.1 L750.3,517.1 L753.5,519.9 L750.3,522.7 L726.7,522.7 Z" fill="#2f2f2f" stroke="#5c5c5c" stroke-width="1.0"/><path d="M443.5,532.7 L451.5,524.6 L493.2,524.6 L501.2,532.7 L493.2,540.8 L451.5,540.8 Z" fill="#3a3a3a" stroke="#5e5e5e" stroke-width="1"/><path d="M510.1,525.5 L517.2,532.6 L510.1,539.7 L503.0,532.6 Z" fill="#f6f6f6" stroke="#f6f6f6" stroke-width="0.8" stroke-linejoin="round"/><g transform="translate(510.1,532.6) scale(0.62) translate(-591.8,-308)" fill="#17a8b0"><rect x="587" y="312.6" width="9.5" height="2.6" rx="0.8"/><path d="M587.5,311.8 L594.5,311.8 L590.5,305.5 L587,306.5 Z"/><circle cx="586.6" cy="306.6" r="1.7"/><path d="M588.2,305 L592.5,300.5 L594,302 L590,306 Z"/><circle cx="592.6" cy="300.6" r="1.3"/><circle cx="595.6" cy="303.6" r="1.1"/><circle cx="597.2" cy="305.4" r="0.9"/></g><path d="M519.3,532.7 L527.3,524.6 L572.8,524.6 L580.8,532.7 L572.8,540.8 L527.3,540.8 Z" fill="#3a3a3a" stroke="#5e5e5e" stroke-width="1"/><path d="M590.1,525.5 L597.2,532.6 L590.1,539.7 L583.0,532.6 Z" fill="#f6f6f6" stroke="#f6f6f6" stroke-width="0.8" stroke-linejoin="round"/><path d="M585.6,532.6 h9" stroke="#e03030" stroke-width="1.4"/><circle cx="590.1" cy="532.6" r="2.6" fill="#e03030"/><circle cx="590.1" cy="532.6" r="1" fill="#fff"/><path d="M599.5,532.7 L607.5,524.6 L663.8,524.6 L671.8,532.7 L663.8,540.8 L607.5,540.8 Z" fill="#3a3a3a" stroke="#5e5e5e" stroke-width="1"/><path d="M680.2,525.5 L687.4,532.6 L680.2,539.7 L673.0,532.6 Z" fill="#f6f6f6" stroke="#f6f6f6" stroke-width="0.8" stroke-linejoin="round"/><path d="M678.6,529.7 h4.2 q0.7,0 0.5,0.7 l-1.2,4.4 q-0.2,0.7 -0.9,0.7 h-4.2 q-0.7,0 -0.5,-0.7 l1.2,-4.4 q0.2,-0.7 0.9,-0.7 z" stroke="#111" stroke-width="1.3" fill="none"/><path d="M675.2,531.8 l2,-1 v2 z" fill="#888"/><path d="M689.4,532.7 L697.4,524.6 L778.6,524.6 L786.6,532.7 L778.6,540.8 L697.4,540.8 Z" fill="#2a7b9e" stroke="#55b8e0" stroke-width="1"/><path d="M991.5,532.9 H1002.3 M996.9,527.4 V538.4" stroke="#3cc43c" stroke-width="1.6"/><path d="M447.2,548.4 L450.4,545.5 L474.7,545.5 L477.9,548.4 L474.7,551.3 L450.4,551.3 Z" fill="#2f2f2f" stroke="#5c5c5c" stroke-width="1.0"/><rect x="338" y="557.5" width="43" height="16.5" fill="#333"/><rect x="338" y="557" width="43" height="1" fill="#454545"/><rect x="473" y="557" width="547" height="1" fill="#454545"/><rect x="472.6" y="557" width="1" height="17" fill="#454545"/></svg>
<div class="t" style="left:343.70px;top:437.94px;font-size:10px;color:#ececec;transform:scaleX(0.9807);">Process Flow Editor</div>
<div class="t" style="left:375.00px;top:458.97px;font-size:9.6px;color:#ececec;transform:scaleX(0.9310);">Product</div>
<div class="t" style="left:442.40px;top:458.97px;font-size:9.6px;color:#ececec;transform:scaleX(0.8803);">Flow Steps</div>
<div class="t" style="left:367.20px;top:500.48px;font-size:9.0px;color:#ececec;transform:scaleX(0.8522);">Flow Group #2</div>
<div class="t" style="left:367.20px;top:528.58px;font-size:9.0px;color:#ececec;transform:scaleX(0.8522);">Flow Group #3</div>
<div class="t" style="left:605.30px;top:473.08px;font-size:9.0px;color:#e0e0e0;transform:scaleX(0.8168);">Sink</div>
<div class="t" style="left:453.60px;top:501.18px;font-size:9.0px;color:#e0e0e0;transform:scaleX(0.8417);">Feeder</div>
<div class="t" style="left:516.60px;top:501.18px;font-size:9.0px;color:#e0e0e0;transform:scaleX(0.8168);">Passive Pallet Station</div>
<div class="t" style="left:626.50px;top:501.18px;font-size:9.0px;color:#e0e0e0;transform:scaleX(0.8246);">Passive Pallet Station2</div>
<div class="t" style="left:774.70px;top:501.18px;font-size:9.0px;color:#e0e0e0;transform:scaleX(0.8246);">Passive Pallet Station2</div>
<div class="t" style="left:889.30px;top:501.18px;font-size:9.0px;color:#e0e0e0;transform:scaleX(0.8538);">ToConveyor</div>
<div class="t" style="left:453.60px;top:529.38px;font-size:9.0px;color:#e0e0e0;transform:scaleX(0.8241);">Process #1</div>
<div class="t" style="left:529.70px;top:529.38px;font-size:9.0px;color:#e0e0e0;transform:scaleX(0.8434);">ToConveyor</div>
<div class="t" style="left:609.50px;top:529.38px;font-size:9.0px;color:#e0e0e0;transform:scaleX(0.8620);">FromConveyor</div>
<div class="t" style="left:699.70px;top:529.38px;font-size:9.0px;color:#f0f0f0;transform:scaleX(0.8246);">Passive Pallet Station2</div>
<div class="t" style="left:344.40px;top:561.03px;font-size:10px;color:#b0b0b0;transform:scaleX(0.9761);">Output</div>
<div class="t" style="left:386.60px;top:561.03px;font-size:10px;color:#f0f0f0;transform:scaleX(0.8986);">Process Flow Editor</div>
<svg class="r" style="left:170px;top:94px;" width="230" height="312" viewBox="0 0 230 312"><rect x="1.80" y="2.00" width="223.20" height="306.00" fill="#545454" /><rect x="1.80" y="2.00" width="223.20" height="1.00" fill="#4a4a4a" /><rect x="224.00" y="2.00" width="1.00" height="306.00" fill="#1e1e1e" /><rect x="3.80" y="3.00" width="220.20" height="18.40" fill="#3c3c3c" /><rect x="4.00" y="21.40" width="219.80" height="284.60" fill="#2f2f2f" /><rect x="4.00" y="20.20" width="219.80" height="1.20" fill="#4a4a4a" /><rect x="221.20" y="21.40" width="1.40" height="284.00" fill="#4a4a4a" /><rect x="4.50" y="21.40" width="104.00" height="21.00" fill="#2a2a2a" /><rect x="108.60" y="21.40" width="112.60" height="19.10" fill="#333333" /><rect x="108.10" y="21.40" width="1.00" height="19.60" fill="#555555" /><rect x="108.60" y="40.00" width="112.60" height="1.00" fill="#555555" /><rect x="7.30" y="42.90" width="211.20" height="259.00" fill="#2a2a2a" stroke="#555555" stroke-width="1.2"/><rect x="7.30" y="113.90" width="211.20" height="2.10" fill="#555555" /><rect x="4.00" y="302.60" width="219.80" height="1.60" fill="#1c1c1c" /><rect x="4.50" y="21.40" width="1.60" height="283.00" fill="#262626" /><path d="M207.39999999999998,9.799999999999997 L214.2,15.799999999999997 M214.2,9.799999999999997 L207.39999999999998,15.799999999999997" stroke="#e8e8e8" stroke-width="1.9"/><g transform="translate(92.60000000000002,25.599999999999994)"><path d="M0.5,2.2 h7.8 M3,2.2 v-1.4 h2.8 v1.4" stroke="#cfcfcf" stroke-width="1" fill="none"/><path d="M1.3,3.4 h6.2 l-0.6,6.8 h-5 z" fill="#b8b8b8"/></g><path d="M186.7,31.200000000000003 h10.6 M192,26.099999999999994 v10.2" stroke="#40d040" stroke-width="2.2"/><g transform="translate(204.8,24.400000000000006)"><rect x="0.5" y="0.5" width="12.5" height="13" rx="1" fill="#2a2a2a" stroke="#8a8a8a" stroke-width="1"/><rect x="2.6" y="2.6" width="1.7" height="1.7" fill="#f0f0f0"/><rect x="2.6" y="5.8" width="1.7" height="1.7" fill="#f0f0f0"/><rect x="2.6" y="9.0" width="1.7" height="1.7" fill="#f0f0f0"/><rect x="5.8" y="2.6" width="1.7" height="1.7" fill="#f0f0f0"/><rect x="5.8" y="5.8" width="1.7" height="1.7" fill="#f0f0f0"/><rect x="5.8" y="9.0" width="1.7" height="1.7" fill="#f0f0f0"/><rect x="9.0" y="2.6" width="1.7" height="1.7" fill="#f0f0f0"/><rect x="9.0" y="5.8" width="1.7" height="1.7" fill="#f0f0f0"/><circle cx="10" cy="10.5" r="2" fill="none" stroke="#3cc43c" stroke-width="1.2"/></g><g transform="translate(23.0,117.8)"><path d="M0.6,5.5 v3.6 h8.4 v-3.6" stroke="#f0f0f0" stroke-width="1.3" fill="none"/><rect x="2.6" y="3" width="4.6" height="4" fill="#f0b000"/><path d="M4.9,0 l1.6,2.2 h-3.2 z" fill="#2cc25c"/></g><g transform="translate(23.0,130.5)"><rect x="1" y="0.5" width="6" height="2" fill="#2cc25c"/><rect x="1" y="3.5" width="6" height="2" fill="#f0b000"/><rect x="1" y="6.5" width="4" height="2" fill="#2cc25c"/><path d="M5,6 l3,0 l1,3 l-3,0.5 z" fill="#f0b000"/></g><g transform="translate(23.0,143.2)"><path d="M0.6,5.5 v3.6 h8.4 v-3.6" stroke="#f0f0f0" stroke-width="1.3" fill="none"/><rect x="2.6" y="3" width="4.6" height="4" fill="#f0b000"/><path d="M4.9,0 l1.6,2.2 h-3.2 z" fill="#2cc25c"/></g><g transform="translate(23.0,155.9)"><path d="M0.6,5.5 v3.6 h8.4 v-3.6" stroke="#f0f0f0" stroke-width="1.3" fill="none"/><rect x="2.6" y="3" width="4.6" height="4" fill="#f0b000"/><path d="M4.9,0 l1.6,2.2 h-3.2 z" fill="#2cc25c"/></g></svg>
<div class="t" style="left:177.30px;top:101.76px;font-size:9.5px;color:#efefef;transform:scaleX(0.8863);">Passive Pallet Station2::ProcessExecutor__HIDE_</div>
<div class="t" style="left:179.90px;top:120.11px;font-size:9.2px;color:#ececec;transform:scaleX(0.7928);">Passive Pallet Station2</div>
<div class="t" style="left:206.20px;top:211.99px;font-size:8.4px;color:#ececec;transform:scaleX(0.9082);">TransportIn: Any product as ProductIn</div>
<div class="t" style="left:206.20px;top:224.69px;font-size:8.4px;color:#ececec;transform:scaleX(0.8842);">GetAssembly: FullPallet2 step as AssemblyOrder</div>
<div class="t" style="left:206.20px;top:237.39px;font-size:8.4px;color:#ececec;transform:scaleX(0.8982);">TransportIn: ProductIn, AssemblyOrder as ArrivedPr...</div>
<div class="t" style="left:206.20px;top:250.09px;font-size:8.4px;color:#ececec;transform:scaleX(0.8999);">TransportOut: ProductIn</div>
</body></html>
